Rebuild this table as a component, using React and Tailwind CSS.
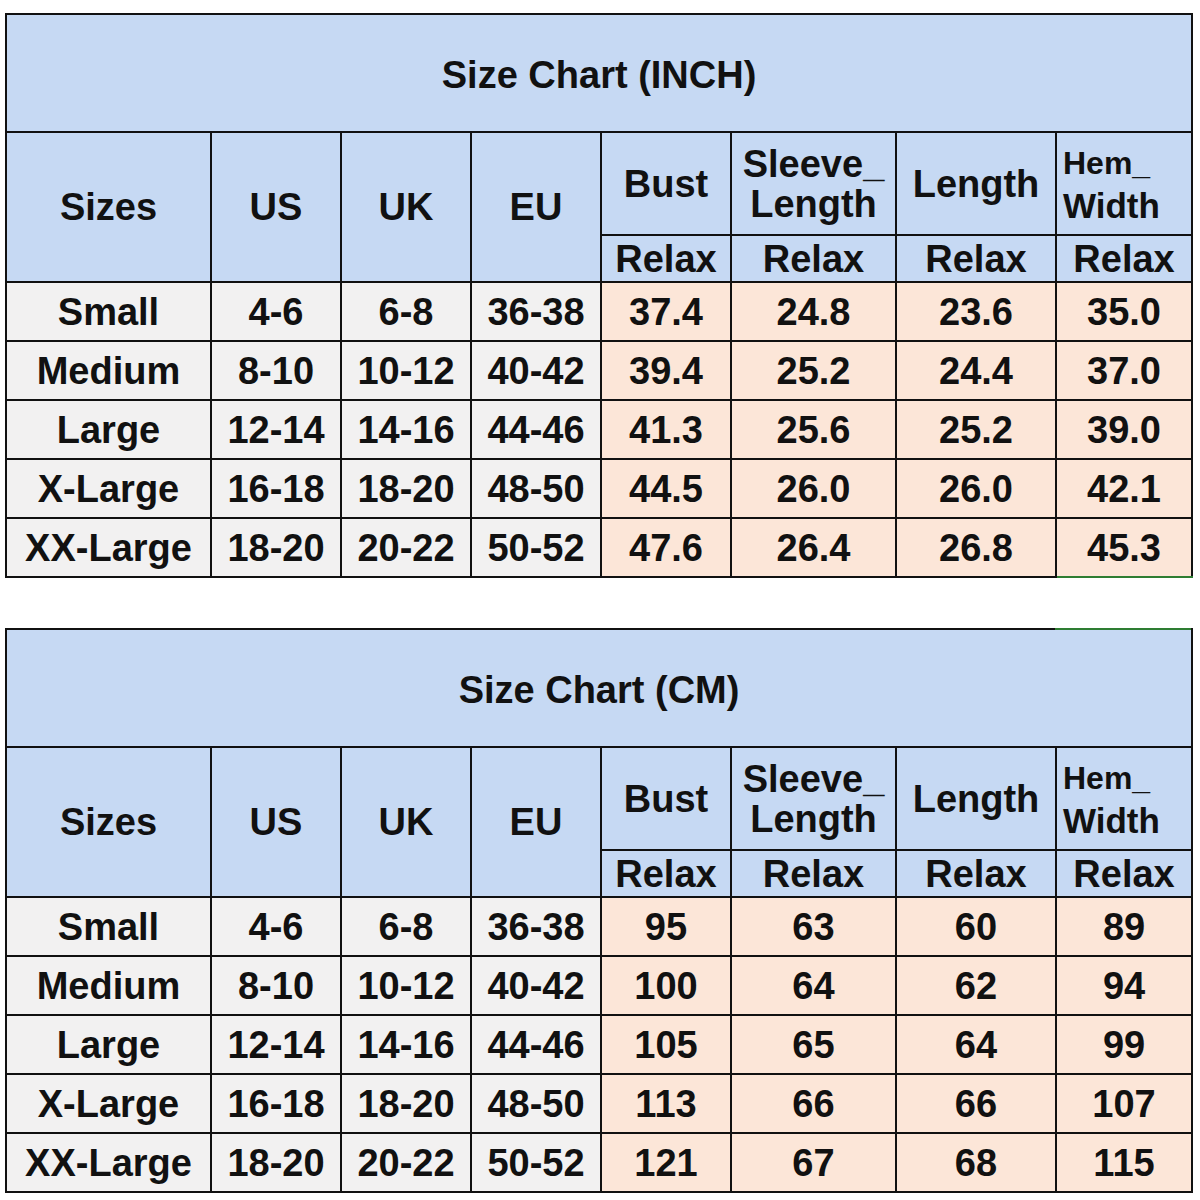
const rowsInch = [
  ['Small', '4-6', '6-8', '36-38', '37.4', '24.8', '23.6', '35.0'],
  ['Medium', '8-10', '10-12', '40-42', '39.4', '25.2', '24.4', '37.0'],
  ['Large', '12-14', '14-16', '44-46', '41.3', '25.6', '25.2', '39.0'],
  ['X-Large', '16-18', '18-20', '48-50', '44.5', '26.0', '26.0', '42.1'],
  ['XX-Large', '18-20', '20-22', '50-52', '47.6', '26.4', '26.8', '45.3'],
];

const rowsCm = [
  ['Small', '4-6', '6-8', '36-38', '95', '63', '60', '89'],
  ['Medium', '8-10', '10-12', '40-42', '100', '64', '62', '94'],
  ['Large', '12-14', '14-16', '44-46', '105', '65', '64', '99'],
  ['X-Large', '16-18', '18-20', '48-50', '113', '66', '66', '107'],
  ['XX-Large', '18-20', '20-22', '50-52', '121', '67', '68', '115'],
];

const cell = 'border-2 border-[#111] text-center align-middle p-0 whitespace-nowrap';

function SizeTable({ title, rows, greenBottom, greenTop }) {
  return (
    <table className="table-fixed border-collapse border-2 border-[#111] w-[1186px] text-[38px] font-bold text-[#111] leading-none">
      <colgroup>
        <col className="w-[205px]" />
        <col className="w-[130px]" />
        <col className="w-[130px]" />
        <col className="w-[130px]" />
        <col className="w-[130px]" />
        <col className="w-[165px]" />
        <col className="w-[160px]" />
        <col className="w-[136px]" />
      </colgroup>
      <tbody>
        <tr className="h-[118px] bg-[#c6d9f3]">
          <td colSpan={8} className={`${cell} pt-[4px] ${greenTop ? 'relative' : ''}`}>
            {title}
            {greenTop && (
              <div className="absolute -top-[2px] right-0 w-[136px] h-[2px] bg-[#2e7d32]" />
            )}
          </td>
        </tr>
        <tr className="h-[103px] bg-[#c6d9f3]">
          <td rowSpan={2} className={cell}>Sizes</td>
          <td rowSpan={2} className={cell}>US</td>
          <td rowSpan={2} className={cell}>UK</td>
          <td rowSpan={2} className={cell}>EU</td>
          <td className={cell}>Bust</td>
          <td className={`${cell} leading-[40px]`}>
            <div>Sleeve_</div>
            <div>Length</div>
          </td>
          <td className={cell}>Length</td>
          <td className={`${cell} text-left pl-[6px]`}>
            <div className="text-[32px] leading-[44px]">Hem_</div>
            <div className="text-[35px] leading-[42px]">Width</div>
          </td>
        </tr>
        <tr className="h-[47px] bg-[#c6d9f3]">
          <td className={cell}>Relax</td>
          <td className={cell}>Relax</td>
          <td className={cell}>Relax</td>
          <td className={cell}>Relax</td>
        </tr>
        {rows.map((r, i) => (
          <tr key={r[0]} className="h-[59px]">
            {r.map((v, j) => (
              <td
                key={j}
                className={`${cell} ${j < 4 ? 'bg-[#f2f1f1]' : 'bg-[#fce6d8]'} ${
                  greenBottom && i === rows.length - 1 && j === 7 ? 'border-b-[#2e7d32]' : ''
                }`}
              >
                {v}
              </td>
            ))}
          </tr>
        ))}
      </tbody>
    </table>
  );
}

export default function App() {
  return (
    <div className="w-[1200px] h-[1200px] bg-white pl-[5px] pt-[13px] font-['Liberation_Sans',Arial,sans-serif]">
      <SizeTable title="Size Chart (INCH)" rows={rowsInch} greenBottom />
      <div className="h-[50px]" />
      <SizeTable title="Size Chart (CM)" rows={rowsCm} greenTop />
    </div>
  );
}
